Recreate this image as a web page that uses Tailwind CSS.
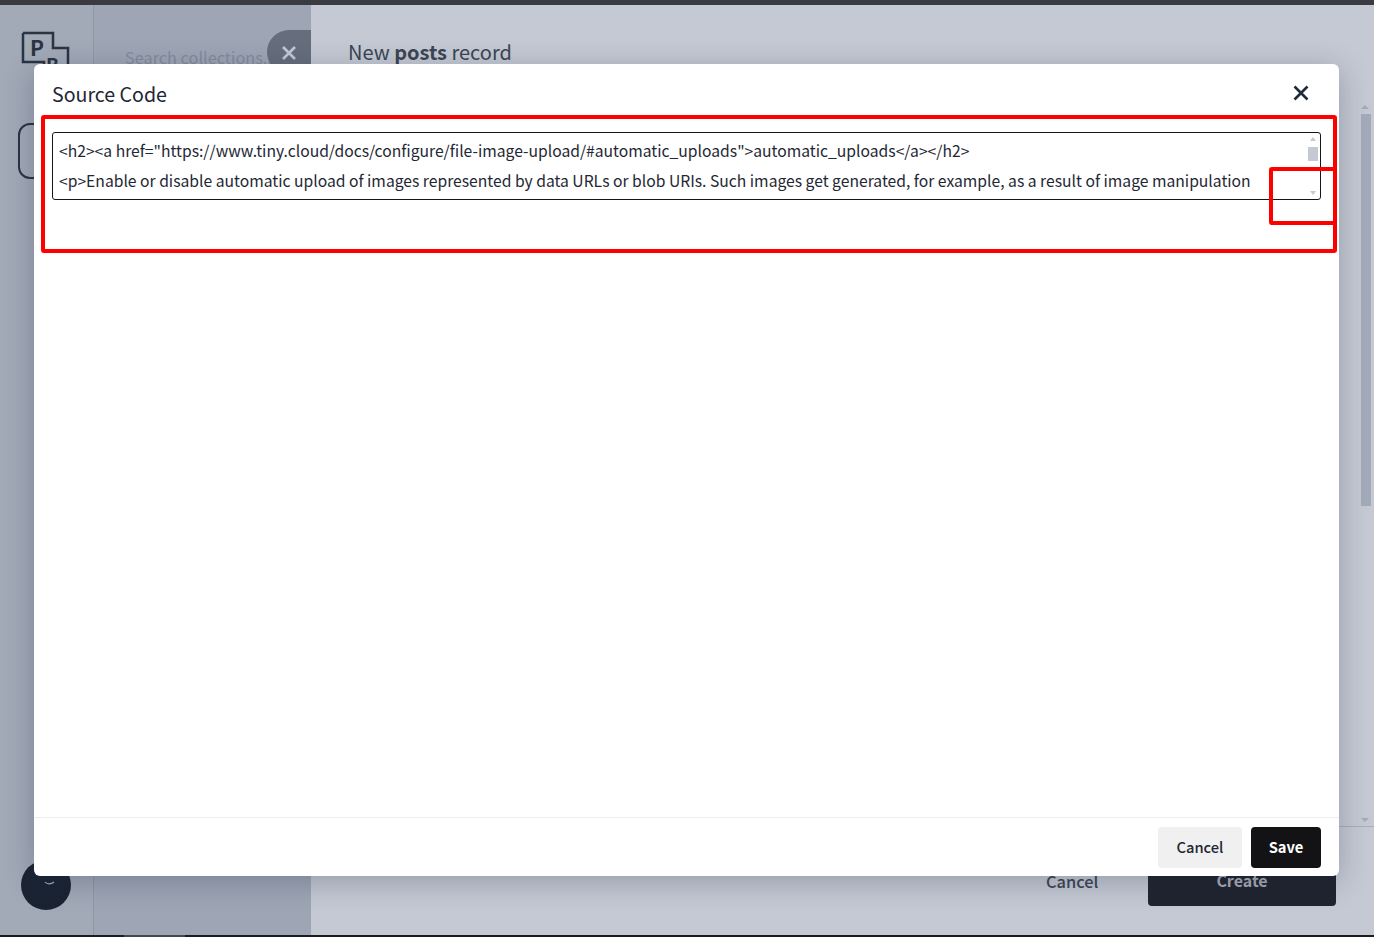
<!DOCTYPE html>
<html lang="en">
<head>
  <meta charset="UTF-8">
  <title>New posts record</title>
  <script src="https://cdn.jsdelivr.net/npm/@tailwindcss/browser@4"></script>
</head>
<body class="font-['Noto_Sans_CJK_SC','Noto_Sans',sans-serif] text-[#16161a]">
  <div class="relative w-[1374px] h-[937px] overflow-hidden flex flex-col bg-[#c4c9d3]">
    <!-- window edge -->
    <div class="h-[5px] bg-[#3a3b40] shrink-0"></div>

    <!-- page behind the dialog -->
    <div class="flex flex-1 min-h-0">
      <aside class="w-[94px] shrink-0 bg-[#a2a9b7] border-r border-[#8f98a8] relative">
        <svg class="absolute left-[21px] top-[26px]" width="50" height="44" viewBox="0 0 50 44" fill="none" stroke="#2b3442" stroke-width="2.500">
          <path d="M2 2h30v15h15v26M2 2v29h21v12"/>
        </svg>
        <span class="absolute left-[30px] top-[29px] text-[21px] leading-[26px] font-bold text-[#2b3442]">P</span>
        <span class="absolute left-[46px] top-[47px] text-[19px] leading-[24px] font-bold text-[#2b3442]">B</span>
        <div class="absolute left-[18px] top-[118px] w-[40px] h-[56px] rounded-[12px] border-2 border-[#2b3442]"></div>
        <div class="absolute left-[21px] top-[855px] w-[50px] h-[50px] rounded-full bg-[#1a2332]">
          <svg class="absolute left-[23px] top-[20px]" width="12" height="8" viewBox="0 0 12 8" fill="none" stroke="#a9aeb8" stroke-width="1.200"><path d="M1 2c2 2.500 6 2.500 9 0"/></svg>
        </div>
      </aside>
      <div class="w-[217px] shrink-0 bg-[#9ea6b5] relative">
        <span class="absolute left-[31px] top-[40px] text-[16.300px] leading-[24px] text-[#838c9c]">Search collections...</span>
        <div class="absolute right-0 top-[25px] w-[44px] h-[44px] rounded-l-full bg-[#666e7d] flex items-center justify-center">
          <svg width="16" height="16" viewBox="0 0 16 16" stroke="#c4c9d3" stroke-width="2.600" class="mt-[2px]"><path d="M2 2l12 12M14 2L2 14"/></svg>
        </div>
      </div>
      <main class="flex-1 relative">
        <h1 class="absolute left-[37px] top-[33px] text-[20px] leading-[28px] text-[#3c4554]">New <b class="font-semibold">posts</b> record</h1>
        <div class="absolute left-[1050px] top-[100px] w-0 h-0 border-x-[4px] border-x-transparent border-b-[4px] border-b-[#a3abba]"></div>
        <div class="absolute left-[1050px] top-[109px] w-[10px] h-[392px] bg-[#a3abba]"></div>
        <div class="absolute left-[1050px] top-[813px] w-0 h-0 border-x-[4px] border-x-transparent border-t-[4px] border-t-[#a3abba]"></div>
        <div class="absolute left-0 right-0 top-[821px] h-px bg-[#a8afbc]"></div>
        <div class="absolute right-[38px] top-[854px] w-[188px] h-[47px] rounded-[4px] bg-[#20242f] flex items-center justify-center text-[16px] font-semibold text-[#a9aeb8] pb-[6px]">Create</div>
        <span class="absolute left-[735px] top-[864px] text-[16.400px] leading-[24px] font-medium text-[#3c4554]">Cancel</span>
      </main>
    </div>
    <div class="h-[2px] bg-[#1a1c20] shrink-0 relative">
      <div class="absolute left-[124px] top-0 w-[61px] h-[2px] bg-[#45474c]"></div>
    </div>

    <!-- Source Code dialog -->
    <div class="absolute left-[34px] top-[64px] w-[1305px] h-[812px] bg-white rounded-[6px] flex flex-col shadow-[0_6px_30px_rgba(30,40,60,0.28)]">
      <div class="h-[56px] flex items-center justify-between pl-[18px] pr-[30px] shrink-0">
        <h2 class="text-[19.600px] leading-[28px] mt-[3px] text-[#1e2733]">Source Code</h2>
        <svg width="16" height="16" viewBox="0 0 16 16" stroke="#1f2a3a" stroke-width="2.600" class="mt-[1px]"><path d="M1.500 1.500l13 13M14.500 1.500l-13 13"/></svg>
      </div>
      <div class="flex-1 min-h-0 px-[18px] pt-[12px]">
        <div class="relative h-[68px] border border-[#16161a] rounded-[3px] pl-[6px] pt-[3px] text-[15.685px] leading-[30px] text-[#1e2733] whitespace-nowrap overflow-hidden">
          <p>&lt;h2&gt;&lt;a href="https://www.tiny.cloud/docs/configure/file-image-upload/#automatic_uploads"&gt;automatic_uploads&lt;/a&gt;&lt;/h2&gt;</p>
          <p>&lt;p&gt;Enable or disable automatic upload of images represented by data URLs or blob URIs. Such images get generated, for example, as a result of image manipulation</p>
          <div class="absolute right-[2px] top-0 bottom-0 w-[10px] bg-white">
            <div class="absolute left-[2px] top-[4px] w-0 h-0 border-x-[3.500px] border-x-transparent border-b-[4px] border-b-[#c4c9d3]"></div>
            <div class="absolute left-0 top-[14px] w-[10px] h-[14px] bg-[#c4c9d3]"></div>
            <div class="absolute left-[2px] bottom-[4px] w-0 h-0 border-x-[3.500px] border-x-transparent border-t-[4px] border-t-[#c4c9d3]"></div>
          </div>
        </div>
      </div>
      <div class="h-[59px] border-t border-[#eceef0] flex items-center justify-end gap-[9px] px-[18px] shrink-0">
        <button class="w-[84px] h-[41px] rounded-[4px] bg-[#f0f0f0] text-[14.700px] font-medium text-[#1e2733]">Cancel</button>
        <button class="w-[70px] h-[41px] rounded-[4px] bg-[#131316] text-[14.700px] font-bold text-white">Save</button>
      </div>
    </div>

    <!-- red annotation boxes -->
    <div class="absolute left-[41px] top-[115px] w-[1296px] h-[138px] border-4 border-[#fe0000] rounded-[3px]"></div>
    <div class="absolute left-[1269px] top-[167px] w-[68px] h-[58px] border-4 border-[#fe0000] rounded-[3px]"></div>
  </div>
</body>
</html>
